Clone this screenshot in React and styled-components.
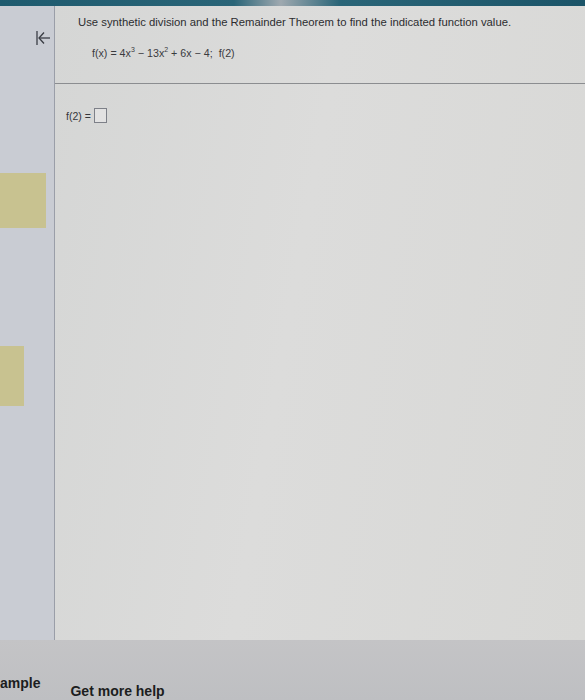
import React from 'react';
import styled, { createGlobalStyle } from 'styled-components';

const GlobalStyle = createGlobalStyle`
  html, body {
    margin: 0;
    padding: 0;
    background: #d4d5d4;
    font-family: "Liberation Sans", Arial, sans-serif;
  }
`;

const Screen = styled.div`
  width: 585px;
  height: 700px;
  display: flex;
  flex-direction: column;
  overflow: hidden;
  background: #d6d6d4;
`;

const TopBar = styled.div`
  height: 6px;
  flex-shrink: 0;
  background: linear-gradient(90deg, #1e5a6e 0%, #2a6578 40%, #9fa9b0 48%, #2a6578 58%, #1b5468 100%);
`;

const Body = styled.div`
  flex: 1;
  display: flex;
  min-height: 0;
`;

const Sidebar = styled.div`
  width: 54px;
  flex-shrink: 0;
  background: #c9ccd3;
  border-right: 1px solid #9a9ea8;
  display: flex;
  flex-direction: column;
`;

const BackButton = styled.div`
  display: flex;
  justify-content: flex-end;
  padding: 24px 3px 0 0;
  height: 20px;
  color: #3a3d44;
`;

const Highlight = styled.div`
  background: #c8c290;
  width: ${p => p.$w}px;
  height: ${p => p.$h}px;
  margin-top: ${p => p.$top}px;
`;

const Main = styled.div`
  flex: 1;
  display: flex;
  flex-direction: column;
  background: linear-gradient(100deg, #d5d6d5 0%, #dcdcdb 45%, #d8d8d6 100%);
`;

const Question = styled.div`
  padding: 10px 0 0 23px;
  height: 67px;
  border-bottom: 1px solid #8b8d90;
`;

const Prompt = styled.p`
  margin: 0;
  font-size: 11.3px;
  color: #2c2d30;
`;

const Formula = styled.p`
  margin: 18px 0 0 14px;
  font-size: 10.7px;
  color: #3a3b3f;
  sup {
    font-size: 7px;
    vertical-align: 5px;
  }
`;

const AnswerRow = styled.div`
  display: flex;
  align-items: center;
  gap: 3px;
  padding: 24px 0 0 11px;
  font-size: 10.5px;
  color: #35363a;
`;

const AnswerBox = styled.span`
  display: inline-block;
  width: 11px;
  height: 13px;
  border: 1px solid #7d8088;
  background: #e2e2e2;
`;

const Footer = styled.div`
  height: 60px;
  flex-shrink: 0;
  background: linear-gradient(180deg, #c4c4c6 0%, #bebfc2 100%);
  display: flex;
  align-items: flex-end;
  gap: 30px;
  padding-bottom: 1px;
  box-sizing: border-box;
`;

const FooterLink = styled.span`
  font-size: ${p => p.$size}px;
  line-height: 1.1;
  font-weight: bold;
  color: #1c1d20;
  margin-bottom: ${p => p.$drop}px;
  white-space: nowrap;
`;

const BackIcon = () => (
  <svg width="16" height="16" viewBox="0 0 16 16" fill="none" stroke="currentColor" strokeWidth="1.3">
    <line x1="2" y1="1" x2="2" y2="15" />
    <line x1="4" y1="8" x2="15" y2="8" />
    <polyline points="9,2.5 4,8 9,13.5" />
  </svg>
);

export default function App() {
  return (
    <>
      <GlobalStyle />
      <Screen>
        <TopBar />
        <Body>
          <Sidebar>
            <BackButton>
              <BackIcon />
            </BackButton>
            <Highlight $w={46} $h={55} $top={123} />
            <Highlight $w={24} $h={60} $top={118} />
          </Sidebar>
          <Main>
            <Question>
              <Prompt>Use synthetic division and the Remainder Theorem to find the indicated function value.</Prompt>
              <Formula>
                f(x) = 4x<sup>3</sup> − 13x<sup>2</sup> + 6x − 4;&nbsp; f(2)
              </Formula>
            </Question>
            <AnswerRow>
              f(2) = <AnswerBox />
            </AnswerRow>
          </Main>
        </Body>
        <Footer>
          <FooterLink $size={14} $drop={8}>ample</FooterLink>
          <FooterLink $size={14} $drop={0}>Get more help</FooterLink>
        </Footer>
      </Screen>
    </>
  );
}
